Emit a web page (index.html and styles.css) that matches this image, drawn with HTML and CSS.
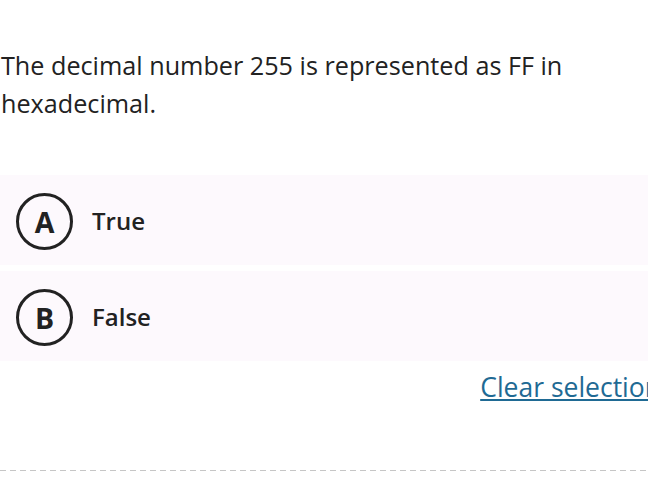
FILE: index.html
```html
<!DOCTYPE html>
<html>
<head>
    <meta charset="UTF-8">
    <meta name="viewport" content="width=device-width, initial-scale=1.0">
    <link rel="stylesheet" href="styles.css">
</head>
<body>
    <div class="quiz">
        <p class="question">The decimal number 255 is represented as FF in hexadecimal.</p>

        <div class="options">
            <label class="option">
                <span class="letter">A</span>
                <span class="option-text">True</span>
            </label>
            <label class="option">
                <span class="letter">B</span>
                <span class="option-text">False</span>
            </label>
        </div>

        <div class="actions">
            <a href="#" class="clear-link">Clear selection</a>
        </div>

        <div class="divider"></div>
    </div>
</body>
</html>
```

FILE: styles.css
```css
* {
    box-sizing: border-box;
}

body {
    margin: 0;
    font-family: "Open Sans", Arial, sans-serif;
    background-color: #fff;
    color: #222;
    overflow: hidden;
}

.quiz {
    width: 661px;
    padding-top: 46px;
}

.question {
    margin: 0 0 53px 1px;
    font-size: 25.2px;
    line-height: 38px;
    width: 600px;
}

.options {
    display: flex;
    flex-direction: column;
    gap: 6px;
}

.option {
    display: flex;
    align-items: center;
    height: 90px;
    padding-left: 16px;
    background-color: #fdf9fd;
    cursor: pointer;
}

.letter {
    display: flex;
    align-items: center;
    justify-content: center;
    width: 57px;
    height: 57px;
    margin-top: 3px;
    border: 3.5px solid #222;
    border-radius: 50%;
    font-size: 28.5px;
    font-weight: 700;
}

.option-text {
    margin-left: 19px;
    font-size: 24px;
    font-weight: 600;
}

.actions {
    display: flex;
    justify-content: flex-end;
    padding-top: 8px;
}

.clear-link {
    font-size: 26.5px;
    line-height: 36px;
    color: #1f6a94;
}

.divider {
    margin-top: 65px;
    height: 1px;
    background: repeating-linear-gradient(to right, #c6c6c6 0 6px, transparent 6px 10px);
}
```
